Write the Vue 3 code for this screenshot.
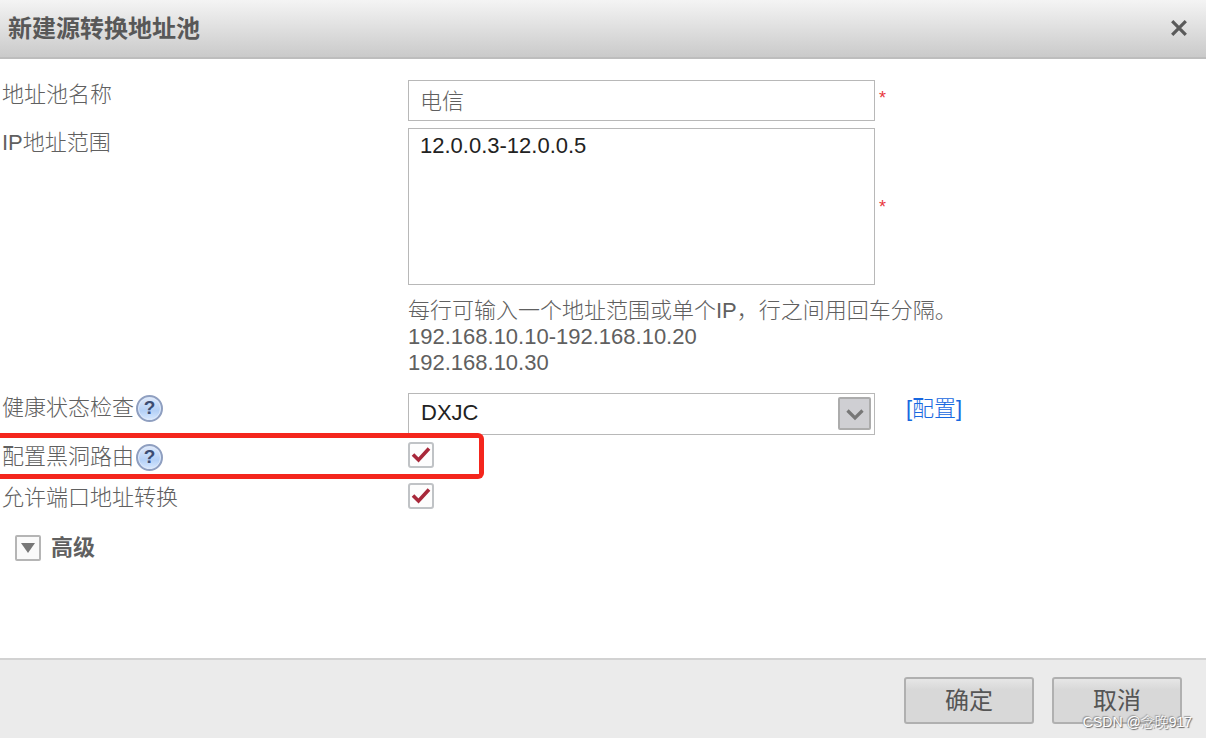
<script setup>
import { ref } from 'vue'

const poolName = ref('电信')
const ranges = ref('12.0.0.3-12.0.0.5')
const health = ref('DXJC')
const blackhole = ref(true)
const portTranslation = ref(true)
</script>

<template>
  <form class="dialog" @submit.prevent>
    <header class="titlebar">
      <h1>新建源转换地址池</h1>
      <button type="button" class="close" aria-label="关闭">
        <svg width="18" height="18" viewBox="0 0 18 18" aria-hidden="true">
          <path d="M2.2 2.2 15.8 15.8M15.8 2.2 2.2 15.8" fill="none" stroke="#5a5a5a" stroke-width="3.2" />
        </svg>
      </button>
    </header>

    <main class="body">
      <div class="row">
        <label class="label" for="pool-name">地址池名称</label>
        <input id="pool-name" v-model="poolName" class="box text" type="text" />
        <span class="star star-top">*</span>
      </div>

      <div class="row">
        <label class="label" for="ranges">IP地址范围</label>
        <textarea id="ranges" v-model="ranges" class="box area"></textarea>
        <span class="star star-mid">*</span>
        <p class="hint">
          每行可输入一个地址范围或单个IP，行之间用回车分隔。<br />192.168.10.10-192.168.10.20<br />192.168.10.30
        </p>
      </div>

      <div class="row row-health">
        <div class="label">
          <label for="health">健康状态检查</label>
          <button type="button" class="help" aria-label="帮助">?</button>
        </div>
        <div class="select">
          <select id="health" v-model="health" class="box">
            <option>DXJC</option>
          </select>
          <span class="arrow">
            <svg width="20" height="14" viewBox="0 0 20 14" aria-hidden="true">
              <path d="M2.5 3.5 10 11 17.5 3.5" fill="none" stroke="#777" stroke-width="3.2" />
            </svg>
          </span>
        </div>
        <a class="config" href="#">[配置]</a>
      </div>

      <div class="row row-check marked">
        <div class="label">
          <label for="blackhole">配置黑洞路由</label>
          <button type="button" class="help" aria-label="帮助">?</button>
        </div>
        <span class="check">
          <input id="blackhole" v-model="blackhole" type="checkbox" />
          <svg v-if="blackhole" width="26" height="26" viewBox="0 0 26 26" aria-hidden="true">
            <path d="M5 12.5 10.5 18 21 6.5" fill="none" stroke="#a8283a" stroke-width="3.6" />
          </svg>
        </span>
      </div>

      <div class="row row-check">
        <label class="label" for="port">允许端口地址转换</label>
        <span class="check">
          <input id="port" v-model="portTranslation" type="checkbox" />
          <svg v-if="portTranslation" width="26" height="26" viewBox="0 0 26 26" aria-hidden="true">
            <path d="M5 12.5 10.5 18 21 6.5" fill="none" stroke="#a8283a" stroke-width="3.6" />
          </svg>
        </span>
      </div>

      <button type="button" class="advanced">
        <span class="toggle">
          <svg width="14" height="10" viewBox="0 0 14 10" aria-hidden="true">
            <path d="M0 0H14L7 10Z" fill="#777" />
          </svg>
        </span>
        高级
      </button>
    </main>

    <footer class="footer">
      <button type="submit" class="btn">确定</button>
      <button type="button" class="btn">取消</button>
      <span class="watermark">CSDN @念晚917</span>
    </footer>
  </form>
</template>

<style>
body {
  margin: 0;
  background: #fff;
}
</style>

<style scoped>
.dialog {
  display: flex;
  flex-direction: column;
  min-height: 100vh;
  font-family: "Liberation Sans", "Noto Sans CJK SC", sans-serif;
  font-size: 22px;
  line-height: 26px;
  font-weight: 300;
  color: #606060;
}
.dialog,
.dialog *,
.marked::after {
  box-sizing: border-box;
}
button,
input,
textarea,
select {
  font: inherit;
  color: inherit;
  margin: 0;
}
.titlebar {
  display: flex;
  align-items: center;
  justify-content: space-between;
  height: 59px;
  padding: 0 18px 2px 8px;
  background: linear-gradient(#f4f4f4, #cacaca);
  border-bottom: 2px solid #bdbdbd;
}
h1 {
  margin: 0;
  padding-top: 2px;
  font-size: 24px;
  line-height: 32px;
  font-weight: 700;
  color: #585858;
}
.close {
  display: flex;
  padding: 0;
  border: 0;
  background: none;
}
.body {
  flex: 1;
  display: flex;
  flex-direction: column;
  gap: 7px;
  padding: 21px 0 16px;
}
.row {
  position: relative;
  display: grid;
  grid-template-columns: 408fr 467fr 331fr;
}
.label {
  display: flex;
  align-items: center;
  align-self: start;
  height: 30px;
  padding-left: 2px;
}
.box {
  display: block;
  width: 100%;
  border: 1px solid #b8b8b8;
  border-radius: 0;
  background: #fff;
  outline: 0;
}
.text {
  height: 41px;
  padding: 0 11px 4px;
}
.area {
  height: 157px;
  padding: 4px 11px;
  resize: none;
  color: #222;
}
.star {
  padding-left: 4px;
  font-size: 18px;
  line-height: 20px;
  color: #e8373d;
}
.star-top {
  padding-top: 8px;
}
.star-mid {
  align-self: center;
}
.hint {
  grid-column: 2 / 4;
  margin: 13px 0 10px;
}
.select {
  position: relative;
}
select.box {
  height: 42px;
  padding: 0 12px 3px;
  appearance: none;
  color: #222;
}
.arrow {
  position: absolute;
  top: 4px;
  right: 4px;
  display: flex;
  align-items: center;
  justify-content: center;
  width: 33px;
  height: 33px;
  border: 2px solid #acacac;
  border-radius: 2px;
  background: #cfcfd3;
  pointer-events: none;
}
.config {
  justify-self: start;
  margin-left: 31px;
  padding-top: 3px;
  color: #1768e0;
  text-decoration: none;
}
.help {
  width: 27px;
  height: 27px;
  margin-left: 2px;
  padding: 0;
  border: 2px solid #8f9fc0;
  border-radius: 50%;
  background: linear-gradient(#dfe9fa, #b4d0f6 60%, #d8e9ff);
  box-shadow: inset 0 0 0 1px #dce8fa;
  font-size: 19px;
  line-height: 22px;
  font-weight: 700;
  color: #3c4c72;
  text-align: center;
}
.row-check {
  height: 34px;
}
.marked::after {
  content: "";
  position: absolute;
  top: -9px;
  left: 0;
  width: 40.1%;
  height: 46px;
  border: 5px solid #f4261d;
  border-left: 0;
  border-radius: 0 6px 6px 0;
  pointer-events: none;
}
.check {
  position: relative;
  width: 26px;
  height: 26px;
}
.check input {
  display: block;
  width: 26px;
  height: 26px;
  appearance: none;
  border: 2px solid #c0c3c6;
  border-radius: 3px;
  background: #fdfdfd;
}
.check svg {
  position: absolute;
  inset: 0;
  pointer-events: none;
}
.advanced {
  display: flex;
  align-items: center;
  align-self: flex-start;
  gap: 10px;
  margin-top: 11px;
  margin-left: 15px;
  padding: 0;
  border: 0;
  background: none;
  font-weight: 700;
}
.toggle {
  display: flex;
  align-items: center;
  justify-content: center;
  width: 26px;
  height: 26px;
  border: 2px solid #b5b5b5;
  border-radius: 2px;
  background: #fafafa;
}
.footer {
  position: relative;
  display: flex;
  align-items: center;
  justify-content: flex-end;
  gap: 18px;
  height: 80px;
  padding: 2px 24px 0 0;
  border-top: 2px solid #d2d2d2;
  background: #ebebeb;
}
.btn {
  width: 130px;
  height: 47px;
  padding: 2px 0 0;
  border: 2px solid #b0b0b0;
  border-radius: 3px;
  background: linear-gradient(#e6e6e6, #d8d8d8 25%);
  font-size: 24px;
  font-weight: 400;
  color: #555;
}
.watermark {
  position: absolute;
  right: 14px;
  bottom: 6px;
  font-size: 14px;
  line-height: 20px;
  color: #fff;
  text-shadow: 1px 1px 1px #666, -1px -1px 1px #999;
}
</style>
